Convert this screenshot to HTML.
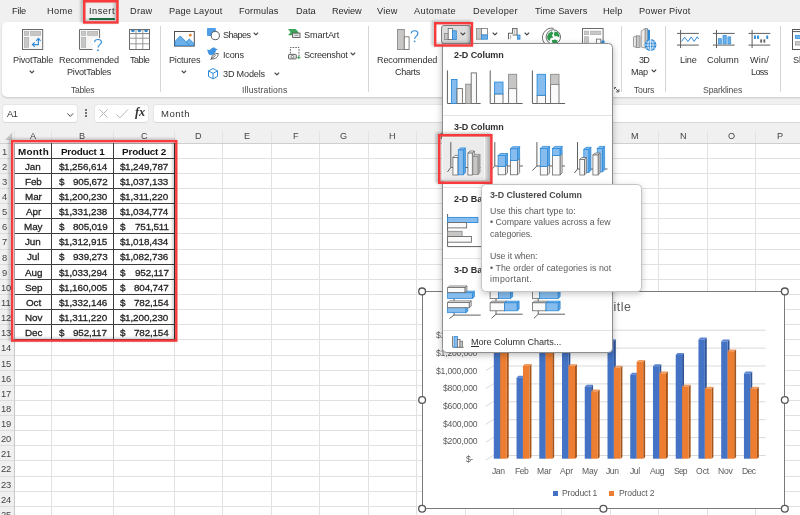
<!DOCTYPE html>
<html lang="en"><head><meta charset="utf-8"><title>Excel - Insert 3-D Clustered Column</title>
<style>
html,body{margin:0;padding:0;}
body{width:800px;height:515px;overflow:hidden;position:relative;background:#f0f0f0;font-family:"Liberation Sans",sans-serif;}
.b{position:absolute;box-sizing:border-box;}
.t{position:absolute;white-space:pre;font-family:"Liberation Sans",sans-serif;will-change:transform;transform:rotate(0.05deg);}
svg{overflow:visible;}
</style></head><body>
<div class="b" style="left:2.00px;top:22.00px;width:830.00px;height:75.00px;background:#fff;border-radius:5px;box-shadow:0 1px 2px rgba(0,0,0,.18);"></div>
<span class="t" style="left:12.00px;top:7.00px;font-size:9.2px;line-height:9.2px;color:#2b2b2b;letter-spacing:-0.206px;">File</span>
<span class="t" style="left:47.00px;top:7.00px;font-size:9.2px;line-height:9.2px;color:#2b2b2b;letter-spacing:0.365px;">Home</span>
<span class="t" style="left:89.00px;top:7.00px;font-size:9.2px;line-height:9.2px;color:#2b2b2b;letter-spacing:0.498px;">Insert</span>
<span class="t" style="left:129.50px;top:7.00px;font-size:9.2px;line-height:9.2px;color:#2b2b2b;letter-spacing:0.258px;">Draw</span>
<span class="t" style="left:169.00px;top:7.00px;font-size:9.2px;line-height:9.2px;color:#2b2b2b;letter-spacing:0.167px;">Page Layout</span>
<span class="t" style="left:239.40px;top:7.00px;font-size:9.2px;line-height:9.2px;color:#2b2b2b;letter-spacing:0.157px;">Formulas</span>
<span class="t" style="left:295.70px;top:7.00px;font-size:9.2px;line-height:9.2px;color:#2b2b2b;letter-spacing:0.067px;">Data</span>
<span class="t" style="left:331.80px;top:7.00px;font-size:9.2px;line-height:9.2px;color:#2b2b2b;letter-spacing:-0.078px;">Review</span>
<span class="t" style="left:377.00px;top:7.00px;font-size:9.2px;line-height:9.2px;color:#2b2b2b;letter-spacing:0.206px;">View</span>
<span class="t" style="left:414.00px;top:7.00px;font-size:9.2px;line-height:9.2px;color:#2b2b2b;letter-spacing:0.328px;">Automate</span>
<span class="t" style="left:473.00px;top:7.00px;font-size:9.2px;line-height:9.2px;color:#2b2b2b;letter-spacing:0.340px;">Developer</span>
<span class="t" style="left:534.60px;top:7.00px;font-size:9.2px;line-height:9.2px;color:#2b2b2b;letter-spacing:0.101px;">Time Savers</span>
<span class="t" style="left:602.60px;top:7.00px;font-size:9.2px;line-height:9.2px;color:#2b2b2b;letter-spacing:0.120px;">Help</span>
<span class="t" style="left:639.40px;top:7.00px;font-size:9.2px;line-height:9.2px;color:#2b2b2b;letter-spacing:0.228px;">Power Pivot</span>
<div class="b" style="left:88.80px;top:17.80px;width:26.70px;height:1.90px;background:#217346;border-radius:1px;"></div>
<svg class="b" style="left:83.00px;top:-0.40px;filter:drop-shadow(-1.6px -0.8px 1.4px rgba(0,0,0,.3));" width="35.70" height="23.70" viewBox="0 0 35.70 23.70"><rect x="1.25" y="1.25" width="33.20" height="21.20" fill="none" stroke="#f83a3c" stroke-width="2.5"/></svg>
<div class="b" style="left:2.00px;top:103.60px;width:76.20px;height:19.40px;background:#fff;border-radius:4px;border:1px solid #e6e6e6;border-bottom-color:#d9d9d9;"></div>
<span class="t" style="left:7.00px;top:110.00px;font-size:9.3px;line-height:9.3px;color:#333;letter-spacing:-0.388px;">A1</span>
<svg class="b" style="left:66.80px;top:112.60px;" width="6.6" height="4" viewBox="0 0 6.6 4"><path d="M0.4 0.4 L3.3 3.4 L6.2 0.4" fill="none" stroke="#4a4a4a" stroke-width="1" stroke-linejoin="round"/></svg>
<div class="b" style="left:85.10px;top:109.10px;width:1.90px;height:1.90px;background:#4a4a4a;border-radius:1px;"></div>
<div class="b" style="left:85.10px;top:112.30px;width:1.90px;height:1.90px;background:#4a4a4a;border-radius:1px;"></div>
<div class="b" style="left:85.10px;top:115.40px;width:1.90px;height:1.90px;background:#4a4a4a;border-radius:1px;"></div>
<div class="b" style="left:94.30px;top:103.60px;width:54.90px;height:19.40px;background:#fff;border-radius:4px;border:1px solid #e6e6e6;border-bottom-color:#d9d9d9;"></div>
<svg class="b" style="left:99.00px;top:109.00px;" width="9" height="9" viewBox="0 0 9 9"><path d="M0.5 0.5 L8.5 8.5 M8.5 0.5 L0.5 8.5" fill="none" stroke="#b5b5b5" stroke-width="1"/></svg>
<svg class="b" style="left:115.60px;top:108.60px;" width="12.4" height="9.4" viewBox="0 0 12.4 9.4"><path d="M0.5 5.6 L3.9 8.9 L11.9 0.6" fill="none" stroke="#b5b5b5" stroke-width="1"/></svg>
<span class="t" style="left:134.8px;top:106.4px;font-size:12.4px;line-height:13px;color:#333;font-family:'Liberation Serif',serif;font-style:italic;font-weight:700;letter-spacing:-0.2px;">fx</span>
<div class="b" style="left:153.30px;top:103.60px;width:700.00px;height:19.40px;background:#fff;border-radius:4px;border:1px solid #e6e6e6;border-bottom-color:#d9d9d9;"></div>
<span class="t" style="left:161.40px;top:109.00px;font-size:9.5px;line-height:9.5px;color:#333;letter-spacing:0.519px;">Month</span>
<div class="b" style="left:0.00px;top:143.50px;width:800.00px;height:380.00px;background:#fff;"></div>
<div class="b" style="left:0.00px;top:143.00px;width:800.00px;height:1.00px;background:#cfcfcf;"></div>
<div class="b" style="left:14.00px;top:144.00px;width:1.00px;height:375.00px;background:#e1e1e1;"></div>
<div class="b" style="left:14.00px;top:131.00px;width:1.00px;height:12.00px;background:#e2e2e2;"></div>
<div class="b" style="left:51.00px;top:144.00px;width:1.00px;height:375.00px;background:#e1e1e1;"></div>
<div class="b" style="left:51.00px;top:131.00px;width:1.00px;height:12.00px;background:#e2e2e2;"></div>
<div class="b" style="left:112.90px;top:144.00px;width:1.00px;height:375.00px;background:#e1e1e1;"></div>
<div class="b" style="left:112.90px;top:131.00px;width:1.00px;height:12.00px;background:#e2e2e2;"></div>
<div class="b" style="left:173.80px;top:144.00px;width:1.00px;height:375.00px;background:#e1e1e1;"></div>
<div class="b" style="left:173.80px;top:131.00px;width:1.00px;height:12.00px;background:#e2e2e2;"></div>
<div class="b" style="left:222.25px;top:144.00px;width:1.00px;height:375.00px;background:#e1e1e1;"></div>
<div class="b" style="left:222.25px;top:131.00px;width:1.00px;height:12.00px;background:#e2e2e2;"></div>
<div class="b" style="left:270.70px;top:144.00px;width:1.00px;height:375.00px;background:#e1e1e1;"></div>
<div class="b" style="left:270.70px;top:131.00px;width:1.00px;height:12.00px;background:#e2e2e2;"></div>
<div class="b" style="left:319.15px;top:144.00px;width:1.00px;height:375.00px;background:#e1e1e1;"></div>
<div class="b" style="left:319.15px;top:131.00px;width:1.00px;height:12.00px;background:#e2e2e2;"></div>
<div class="b" style="left:367.60px;top:144.00px;width:1.00px;height:375.00px;background:#e1e1e1;"></div>
<div class="b" style="left:367.60px;top:131.00px;width:1.00px;height:12.00px;background:#e2e2e2;"></div>
<div class="b" style="left:416.05px;top:144.00px;width:1.00px;height:375.00px;background:#e1e1e1;"></div>
<div class="b" style="left:416.05px;top:131.00px;width:1.00px;height:12.00px;background:#e2e2e2;"></div>
<div class="b" style="left:464.50px;top:144.00px;width:1.00px;height:375.00px;background:#e1e1e1;"></div>
<div class="b" style="left:464.50px;top:131.00px;width:1.00px;height:12.00px;background:#e2e2e2;"></div>
<div class="b" style="left:512.95px;top:144.00px;width:1.00px;height:375.00px;background:#e1e1e1;"></div>
<div class="b" style="left:512.95px;top:131.00px;width:1.00px;height:12.00px;background:#e2e2e2;"></div>
<div class="b" style="left:561.40px;top:144.00px;width:1.00px;height:375.00px;background:#e1e1e1;"></div>
<div class="b" style="left:561.40px;top:131.00px;width:1.00px;height:12.00px;background:#e2e2e2;"></div>
<div class="b" style="left:609.85px;top:144.00px;width:1.00px;height:375.00px;background:#e1e1e1;"></div>
<div class="b" style="left:609.85px;top:131.00px;width:1.00px;height:12.00px;background:#e2e2e2;"></div>
<div class="b" style="left:658.30px;top:144.00px;width:1.00px;height:375.00px;background:#e1e1e1;"></div>
<div class="b" style="left:658.30px;top:131.00px;width:1.00px;height:12.00px;background:#e2e2e2;"></div>
<div class="b" style="left:706.75px;top:144.00px;width:1.00px;height:375.00px;background:#e1e1e1;"></div>
<div class="b" style="left:706.75px;top:131.00px;width:1.00px;height:12.00px;background:#e2e2e2;"></div>
<div class="b" style="left:755.20px;top:144.00px;width:1.00px;height:375.00px;background:#e1e1e1;"></div>
<div class="b" style="left:755.20px;top:131.00px;width:1.00px;height:12.00px;background:#e2e2e2;"></div>
<div class="b" style="left:803.65px;top:144.00px;width:1.00px;height:375.00px;background:#e1e1e1;"></div>
<div class="b" style="left:803.65px;top:131.00px;width:1.00px;height:12.00px;background:#e2e2e2;"></div>
<div class="b" style="left:852.10px;top:144.00px;width:1.00px;height:375.00px;background:#e1e1e1;"></div>
<div class="b" style="left:852.10px;top:131.00px;width:1.00px;height:12.00px;background:#e2e2e2;"></div>
<div class="b" style="left:0.00px;top:157.83px;width:800.00px;height:1.00px;background:#e1e1e1;"></div>
<div class="b" style="left:0.00px;top:172.96px;width:800.00px;height:1.00px;background:#e1e1e1;"></div>
<div class="b" style="left:0.00px;top:188.09px;width:800.00px;height:1.00px;background:#e1e1e1;"></div>
<div class="b" style="left:0.00px;top:203.22px;width:800.00px;height:1.00px;background:#e1e1e1;"></div>
<div class="b" style="left:0.00px;top:218.35px;width:800.00px;height:1.00px;background:#e1e1e1;"></div>
<div class="b" style="left:0.00px;top:233.48px;width:800.00px;height:1.00px;background:#e1e1e1;"></div>
<div class="b" style="left:0.00px;top:248.61px;width:800.00px;height:1.00px;background:#e1e1e1;"></div>
<div class="b" style="left:0.00px;top:263.74px;width:800.00px;height:1.00px;background:#e1e1e1;"></div>
<div class="b" style="left:0.00px;top:278.87px;width:800.00px;height:1.00px;background:#e1e1e1;"></div>
<div class="b" style="left:0.00px;top:294.00px;width:800.00px;height:1.00px;background:#e1e1e1;"></div>
<div class="b" style="left:0.00px;top:309.13px;width:800.00px;height:1.00px;background:#e1e1e1;"></div>
<div class="b" style="left:0.00px;top:324.26px;width:800.00px;height:1.00px;background:#e1e1e1;"></div>
<div class="b" style="left:0.00px;top:339.39px;width:800.00px;height:1.00px;background:#e1e1e1;"></div>
<div class="b" style="left:0.00px;top:354.52px;width:800.00px;height:1.00px;background:#e1e1e1;"></div>
<div class="b" style="left:0.00px;top:369.65px;width:800.00px;height:1.00px;background:#e1e1e1;"></div>
<div class="b" style="left:0.00px;top:384.78px;width:800.00px;height:1.00px;background:#e1e1e1;"></div>
<div class="b" style="left:0.00px;top:399.91px;width:800.00px;height:1.00px;background:#e1e1e1;"></div>
<div class="b" style="left:0.00px;top:415.04px;width:800.00px;height:1.00px;background:#e1e1e1;"></div>
<div class="b" style="left:0.00px;top:430.17px;width:800.00px;height:1.00px;background:#e1e1e1;"></div>
<div class="b" style="left:0.00px;top:445.30px;width:800.00px;height:1.00px;background:#e1e1e1;"></div>
<div class="b" style="left:0.00px;top:460.43px;width:800.00px;height:1.00px;background:#e1e1e1;"></div>
<div class="b" style="left:0.00px;top:475.56px;width:800.00px;height:1.00px;background:#e1e1e1;"></div>
<div class="b" style="left:0.00px;top:490.69px;width:800.00px;height:1.00px;background:#e1e1e1;"></div>
<div class="b" style="left:0.00px;top:505.82px;width:800.00px;height:1.00px;background:#e1e1e1;"></div>
<div class="b" style="left:0.00px;top:520.95px;width:800.00px;height:1.00px;background:#e1e1e1;"></div>
<div class="b" style="left:0.00px;top:536.08px;width:800.00px;height:1.00px;background:#e1e1e1;"></div>
<div class="b" style="left:0.00px;top:144.00px;width:14.70px;height:375.00px;background:#f0f0f0;border-right:1px solid #c9c9c9;"></div>
<div class="b" style="left:0.00px;top:157.83px;width:13.70px;height:1.00px;background:#dcdcdc;"></div>
<div class="b" style="left:0.00px;top:172.96px;width:13.70px;height:1.00px;background:#dcdcdc;"></div>
<div class="b" style="left:0.00px;top:188.09px;width:13.70px;height:1.00px;background:#dcdcdc;"></div>
<div class="b" style="left:0.00px;top:203.22px;width:13.70px;height:1.00px;background:#dcdcdc;"></div>
<div class="b" style="left:0.00px;top:218.35px;width:13.70px;height:1.00px;background:#dcdcdc;"></div>
<div class="b" style="left:0.00px;top:233.48px;width:13.70px;height:1.00px;background:#dcdcdc;"></div>
<div class="b" style="left:0.00px;top:248.61px;width:13.70px;height:1.00px;background:#dcdcdc;"></div>
<div class="b" style="left:0.00px;top:263.74px;width:13.70px;height:1.00px;background:#dcdcdc;"></div>
<div class="b" style="left:0.00px;top:278.87px;width:13.70px;height:1.00px;background:#dcdcdc;"></div>
<div class="b" style="left:0.00px;top:294.00px;width:13.70px;height:1.00px;background:#dcdcdc;"></div>
<div class="b" style="left:0.00px;top:309.13px;width:13.70px;height:1.00px;background:#dcdcdc;"></div>
<div class="b" style="left:0.00px;top:324.26px;width:13.70px;height:1.00px;background:#dcdcdc;"></div>
<div class="b" style="left:0.00px;top:339.39px;width:13.70px;height:1.00px;background:#dcdcdc;"></div>
<div class="b" style="left:0.00px;top:354.52px;width:13.70px;height:1.00px;background:#dcdcdc;"></div>
<div class="b" style="left:0.00px;top:369.65px;width:13.70px;height:1.00px;background:#dcdcdc;"></div>
<div class="b" style="left:0.00px;top:384.78px;width:13.70px;height:1.00px;background:#dcdcdc;"></div>
<div class="b" style="left:0.00px;top:399.91px;width:13.70px;height:1.00px;background:#dcdcdc;"></div>
<div class="b" style="left:0.00px;top:415.04px;width:13.70px;height:1.00px;background:#dcdcdc;"></div>
<div class="b" style="left:0.00px;top:430.17px;width:13.70px;height:1.00px;background:#dcdcdc;"></div>
<div class="b" style="left:0.00px;top:445.30px;width:13.70px;height:1.00px;background:#dcdcdc;"></div>
<div class="b" style="left:0.00px;top:460.43px;width:13.70px;height:1.00px;background:#dcdcdc;"></div>
<div class="b" style="left:0.00px;top:475.56px;width:13.70px;height:1.00px;background:#dcdcdc;"></div>
<div class="b" style="left:0.00px;top:490.69px;width:13.70px;height:1.00px;background:#dcdcdc;"></div>
<div class="b" style="left:0.00px;top:505.82px;width:13.70px;height:1.00px;background:#dcdcdc;"></div>
<div class="b" style="left:0.00px;top:520.95px;width:13.70px;height:1.00px;background:#dcdcdc;"></div>
<div class="b" style="left:0.00px;top:536.08px;width:13.70px;height:1.00px;background:#dcdcdc;"></div>
<svg class="b" style="left:0.00px;top:0.00px;" width="20" height="145" viewBox="0 0 20 145"><path d="M12.3 132.6 V139.9 H4.9 Z" fill="#c6c6c6"/></svg>
<span class="t" style="left:29.97px;top:132.00px;font-size:9.1px;line-height:9.1px;color:#444;">A</span>
<span class="t" style="left:79.42px;top:132.00px;font-size:9.1px;line-height:9.1px;color:#444;">B</span>
<span class="t" style="left:140.56px;top:132.00px;font-size:9.1px;line-height:9.1px;color:#444;">C</span>
<span class="t" style="left:195.24px;top:132.00px;font-size:9.1px;line-height:9.1px;color:#444;">D</span>
<span class="t" style="left:243.94px;top:132.00px;font-size:9.1px;line-height:9.1px;color:#444;">E</span>
<span class="t" style="left:292.65px;top:132.00px;font-size:9.1px;line-height:9.1px;color:#444;">F</span>
<span class="t" style="left:340.34px;top:132.00px;font-size:9.1px;line-height:9.1px;color:#444;">G</span>
<span class="t" style="left:389.04px;top:132.00px;font-size:9.1px;line-height:9.1px;color:#444;">H</span>
<span class="t" style="left:439.51px;top:132.00px;font-size:9.1px;line-height:9.1px;color:#444;">I</span>
<span class="t" style="left:486.95px;top:132.00px;font-size:9.1px;line-height:9.1px;color:#444;">J</span>
<span class="t" style="left:534.64px;top:132.00px;font-size:9.1px;line-height:9.1px;color:#444;">K</span>
<span class="t" style="left:583.59px;top:132.00px;font-size:9.1px;line-height:9.1px;color:#444;">L</span>
<span class="t" style="left:630.78px;top:132.00px;font-size:9.1px;line-height:9.1px;color:#444;">M</span>
<span class="t" style="left:679.74px;top:132.00px;font-size:9.1px;line-height:9.1px;color:#444;">N</span>
<span class="t" style="left:727.94px;top:132.00px;font-size:9.1px;line-height:9.1px;color:#444;">O</span>
<span class="t" style="left:776.89px;top:132.00px;font-size:9.1px;line-height:9.1px;color:#444;">P</span>
<span class="t" style="left:2.39px;top:147.00px;font-size:9.4px;line-height:9.4px;color:#444;">1</span>
<span class="t" style="left:2.39px;top:162.00px;font-size:9.4px;line-height:9.4px;color:#444;">2</span>
<span class="t" style="left:2.39px;top:177.00px;font-size:9.4px;line-height:9.4px;color:#444;">3</span>
<span class="t" style="left:2.39px;top:192.00px;font-size:9.4px;line-height:9.4px;color:#444;">4</span>
<span class="t" style="left:2.39px;top:207.00px;font-size:9.4px;line-height:9.4px;color:#444;">5</span>
<span class="t" style="left:2.39px;top:222.00px;font-size:9.4px;line-height:9.4px;color:#444;">6</span>
<span class="t" style="left:2.39px;top:237.00px;font-size:9.4px;line-height:9.4px;color:#444;">7</span>
<span class="t" style="left:2.39px;top:253.00px;font-size:9.4px;line-height:9.4px;color:#444;">8</span>
<span class="t" style="left:2.39px;top:268.00px;font-size:9.4px;line-height:9.4px;color:#444;">9</span>
<span class="t" style="left:0.60px;top:283.00px;font-size:9.4px;line-height:9.4px;color:#444;letter-spacing:-0.328px;">10</span>
<span class="t" style="left:0.60px;top:298.00px;font-size:9.4px;line-height:9.4px;color:#444;letter-spacing:0.021px;">11</span>
<span class="t" style="left:0.60px;top:313.00px;font-size:9.4px;line-height:9.4px;color:#444;letter-spacing:-0.328px;">12</span>
<span class="t" style="left:0.60px;top:328.00px;font-size:9.4px;line-height:9.4px;color:#444;letter-spacing:-0.328px;">13</span>
<span class="t" style="left:0.60px;top:343.00px;font-size:9.4px;line-height:9.4px;color:#444;letter-spacing:-0.328px;">14</span>
<span class="t" style="left:0.60px;top:359.00px;font-size:9.4px;line-height:9.4px;color:#444;letter-spacing:-0.328px;">15</span>
<span class="t" style="left:0.60px;top:374.00px;font-size:9.4px;line-height:9.4px;color:#444;letter-spacing:-0.328px;">16</span>
<span class="t" style="left:0.60px;top:389.00px;font-size:9.4px;line-height:9.4px;color:#444;letter-spacing:-0.328px;">17</span>
<span class="t" style="left:0.60px;top:404.00px;font-size:9.4px;line-height:9.4px;color:#444;letter-spacing:-0.328px;">18</span>
<span class="t" style="left:0.60px;top:419.00px;font-size:9.4px;line-height:9.4px;color:#444;letter-spacing:-0.328px;">19</span>
<span class="t" style="left:0.60px;top:434.00px;font-size:9.4px;line-height:9.4px;color:#444;letter-spacing:-0.328px;">20</span>
<span class="t" style="left:0.60px;top:449.00px;font-size:9.4px;line-height:9.4px;color:#444;letter-spacing:-0.328px;">21</span>
<span class="t" style="left:0.60px;top:464.00px;font-size:9.4px;line-height:9.4px;color:#444;letter-spacing:-0.328px;">22</span>
<span class="t" style="left:0.60px;top:480.00px;font-size:9.4px;line-height:9.4px;color:#444;letter-spacing:-0.328px;">23</span>
<span class="t" style="left:0.60px;top:495.00px;font-size:9.4px;line-height:9.4px;color:#444;letter-spacing:-0.328px;">24</span>
<span class="t" style="left:0.60px;top:510.00px;font-size:9.4px;line-height:9.4px;color:#444;letter-spacing:-0.328px;">25</span>
<div class="b" style="left:12.00px;top:141.00px;width:163.00px;height:199.00px;background:#fff;"></div>
<div class="b" style="left:14.00px;top:142.70px;width:160.80px;height:1.00px;background:#a4a4a4;"></div>
<div class="b" style="left:14.00px;top:157.83px;width:160.80px;height:1.00px;background:#3c3c3c;"></div>
<div class="b" style="left:14.00px;top:172.96px;width:160.80px;height:1.00px;background:#3c3c3c;"></div>
<div class="b" style="left:14.00px;top:188.09px;width:160.80px;height:1.00px;background:#3c3c3c;"></div>
<div class="b" style="left:14.00px;top:203.22px;width:160.80px;height:1.00px;background:#3c3c3c;"></div>
<div class="b" style="left:14.00px;top:218.35px;width:160.80px;height:1.00px;background:#3c3c3c;"></div>
<div class="b" style="left:14.00px;top:233.48px;width:160.80px;height:1.00px;background:#3c3c3c;"></div>
<div class="b" style="left:14.00px;top:248.61px;width:160.80px;height:1.00px;background:#3c3c3c;"></div>
<div class="b" style="left:14.00px;top:263.74px;width:160.80px;height:1.00px;background:#3c3c3c;"></div>
<div class="b" style="left:14.00px;top:278.87px;width:160.80px;height:1.00px;background:#3c3c3c;"></div>
<div class="b" style="left:14.00px;top:294.00px;width:160.80px;height:1.00px;background:#3c3c3c;"></div>
<div class="b" style="left:14.00px;top:309.13px;width:160.80px;height:1.00px;background:#3c3c3c;"></div>
<div class="b" style="left:14.00px;top:324.26px;width:160.80px;height:1.00px;background:#3c3c3c;"></div>
<div class="b" style="left:14.00px;top:339.39px;width:160.80px;height:1.00px;background:#3c3c3c;"></div>
<div class="b" style="left:14.00px;top:142.70px;width:1.00px;height:197.69px;background:#a4a4a4;"></div>
<div class="b" style="left:51.00px;top:142.70px;width:1.00px;height:197.69px;background:#3c3c3c;"></div>
<div class="b" style="left:112.90px;top:142.70px;width:1.00px;height:197.69px;background:#3c3c3c;"></div>
<div class="b" style="left:173.80px;top:142.70px;width:1.00px;height:197.69px;background:#3c3c3c;"></div>
<span class="t" style="left:17.70px;top:147.00px;font-size:9.9px;line-height:9.9px;color:#111;font-weight:700;letter-spacing:0.263px;">Month</span>
<span class="t" style="left:60.60px;top:147.00px;font-size:9.9px;line-height:9.9px;color:#111;font-weight:700;letter-spacing:-0.240px;">Product 1</span>
<span class="t" style="left:122.00px;top:147.00px;font-size:9.9px;line-height:9.9px;color:#111;font-weight:700;letter-spacing:-0.151px;">Product 2</span>
<span class="t" style="left:25.34px;top:162.00px;font-size:9.9px;line-height:9.9px;color:#222;letter-spacing:-0.080px;-webkit-text-stroke:0.28px #222;">Jan</span>
<span class="t" style="left:58.60px;top:162.00px;font-size:9.9px;line-height:9.9px;color:#222;letter-spacing:-0.165px;-webkit-text-stroke:0.28px #222;">$</span>
<span class="t" style="left:63.94px;top:162.00px;font-size:9.9px;line-height:9.9px;color:#222;letter-spacing:-0.076px;-webkit-text-stroke:0.28px #222;">1,256,614</span>
<span class="t" style="left:120.00px;top:162.00px;font-size:9.9px;line-height:9.9px;color:#222;letter-spacing:-0.165px;-webkit-text-stroke:0.28px #222;">$</span>
<span class="t" style="left:125.34px;top:162.00px;font-size:9.9px;line-height:9.9px;color:#222;letter-spacing:-0.076px;-webkit-text-stroke:0.28px #222;">1,249,787</span>
<span class="t" style="left:24.80px;top:177.00px;font-size:9.9px;line-height:9.9px;color:#222;letter-spacing:-0.085px;-webkit-text-stroke:0.28px #222;">Feb</span>
<span class="t" style="left:58.60px;top:177.00px;font-size:9.9px;line-height:9.9px;color:#222;letter-spacing:-0.165px;-webkit-text-stroke:0.28px #222;">$</span>
<span class="t" style="left:72.77px;top:177.00px;font-size:9.9px;line-height:9.9px;color:#222;letter-spacing:-0.179px;-webkit-text-stroke:0.28px #222;">905,672</span>
<span class="t" style="left:120.00px;top:177.00px;font-size:9.9px;line-height:9.9px;color:#222;letter-spacing:-0.165px;-webkit-text-stroke:0.28px #222;">$</span>
<span class="t" style="left:125.34px;top:177.00px;font-size:9.9px;line-height:9.9px;color:#222;letter-spacing:-0.076px;-webkit-text-stroke:0.28px #222;">1,037,133</span>
<span class="t" style="left:24.80px;top:192.00px;font-size:9.9px;line-height:9.9px;color:#222;letter-spacing:-0.085px;-webkit-text-stroke:0.28px #222;">Mar</span>
<span class="t" style="left:58.60px;top:192.00px;font-size:9.9px;line-height:9.9px;color:#222;letter-spacing:-0.165px;-webkit-text-stroke:0.28px #222;">$</span>
<span class="t" style="left:63.94px;top:192.00px;font-size:9.9px;line-height:9.9px;color:#222;letter-spacing:-0.076px;-webkit-text-stroke:0.28px #222;">1,200,230</span>
<span class="t" style="left:120.00px;top:192.00px;font-size:9.9px;line-height:9.9px;color:#222;letter-spacing:-0.165px;-webkit-text-stroke:0.28px #222;">$</span>
<span class="t" style="left:125.34px;top:192.00px;font-size:9.9px;line-height:9.9px;color:#222;letter-spacing:0.006px;-webkit-text-stroke:0.28px #222;">1,311,220</span>
<span class="t" style="left:25.61px;top:207.00px;font-size:9.9px;line-height:9.9px;color:#222;letter-spacing:-0.077px;-webkit-text-stroke:0.28px #222;">Apr</span>
<span class="t" style="left:58.60px;top:207.00px;font-size:9.9px;line-height:9.9px;color:#222;letter-spacing:-0.165px;-webkit-text-stroke:0.28px #222;">$</span>
<span class="t" style="left:63.94px;top:207.00px;font-size:9.9px;line-height:9.9px;color:#222;letter-spacing:-0.076px;-webkit-text-stroke:0.28px #222;">1,331,238</span>
<span class="t" style="left:120.00px;top:207.00px;font-size:9.9px;line-height:9.9px;color:#222;letter-spacing:-0.165px;-webkit-text-stroke:0.28px #222;">$</span>
<span class="t" style="left:125.34px;top:207.00px;font-size:9.9px;line-height:9.9px;color:#222;letter-spacing:-0.076px;-webkit-text-stroke:0.28px #222;">1,034,774</span>
<span class="t" style="left:23.99px;top:222.00px;font-size:9.9px;line-height:9.9px;color:#222;letter-spacing:-0.094px;-webkit-text-stroke:0.28px #222;">May</span>
<span class="t" style="left:58.60px;top:222.00px;font-size:9.9px;line-height:9.9px;color:#222;letter-spacing:-0.165px;-webkit-text-stroke:0.28px #222;">$</span>
<span class="t" style="left:72.77px;top:222.00px;font-size:9.9px;line-height:9.9px;color:#222;letter-spacing:-0.179px;-webkit-text-stroke:0.28px #222;">805,019</span>
<span class="t" style="left:120.00px;top:222.00px;font-size:9.9px;line-height:9.9px;color:#222;letter-spacing:-0.165px;-webkit-text-stroke:0.28px #222;">$</span>
<span class="t" style="left:134.87px;top:222.00px;font-size:9.9px;line-height:9.9px;color:#222;letter-spacing:-0.175px;-webkit-text-stroke:0.28px #222;">751,511</span>
<span class="t" style="left:25.34px;top:237.00px;font-size:9.9px;line-height:9.9px;color:#222;letter-spacing:-0.080px;-webkit-text-stroke:0.28px #222;">Jun</span>
<span class="t" style="left:58.60px;top:237.00px;font-size:9.9px;line-height:9.9px;color:#222;letter-spacing:-0.165px;-webkit-text-stroke:0.28px #222;">$</span>
<span class="t" style="left:63.94px;top:237.00px;font-size:9.9px;line-height:9.9px;color:#222;letter-spacing:-0.076px;-webkit-text-stroke:0.28px #222;">1,312,915</span>
<span class="t" style="left:120.00px;top:237.00px;font-size:9.9px;line-height:9.9px;color:#222;letter-spacing:-0.165px;-webkit-text-stroke:0.28px #222;">$</span>
<span class="t" style="left:125.34px;top:237.00px;font-size:9.9px;line-height:9.9px;color:#222;letter-spacing:-0.076px;-webkit-text-stroke:0.28px #222;">1,018,434</span>
<span class="t" style="left:26.97px;top:252.00px;font-size:9.9px;line-height:9.9px;color:#222;letter-spacing:-0.063px;-webkit-text-stroke:0.28px #222;">Jul</span>
<span class="t" style="left:58.60px;top:252.00px;font-size:9.9px;line-height:9.9px;color:#222;letter-spacing:-0.165px;-webkit-text-stroke:0.28px #222;">$</span>
<span class="t" style="left:72.77px;top:252.00px;font-size:9.9px;line-height:9.9px;color:#222;letter-spacing:-0.179px;-webkit-text-stroke:0.28px #222;">939,273</span>
<span class="t" style="left:120.00px;top:252.00px;font-size:9.9px;line-height:9.9px;color:#222;letter-spacing:-0.165px;-webkit-text-stroke:0.28px #222;">$</span>
<span class="t" style="left:125.34px;top:252.00px;font-size:9.9px;line-height:9.9px;color:#222;letter-spacing:-0.076px;-webkit-text-stroke:0.28px #222;">1,082,736</span>
<span class="t" style="left:24.52px;top:268.00px;font-size:9.9px;line-height:9.9px;color:#222;letter-spacing:-0.088px;-webkit-text-stroke:0.28px #222;">Aug</span>
<span class="t" style="left:58.60px;top:268.00px;font-size:9.9px;line-height:9.9px;color:#222;letter-spacing:-0.165px;-webkit-text-stroke:0.28px #222;">$</span>
<span class="t" style="left:63.94px;top:268.00px;font-size:9.9px;line-height:9.9px;color:#222;letter-spacing:-0.076px;-webkit-text-stroke:0.28px #222;">1,033,294</span>
<span class="t" style="left:120.00px;top:268.00px;font-size:9.9px;line-height:9.9px;color:#222;letter-spacing:-0.165px;-webkit-text-stroke:0.28px #222;">$</span>
<span class="t" style="left:134.87px;top:268.00px;font-size:9.9px;line-height:9.9px;color:#222;letter-spacing:-0.175px;-webkit-text-stroke:0.28px #222;">952,117</span>
<span class="t" style="left:24.52px;top:283.00px;font-size:9.9px;line-height:9.9px;color:#222;letter-spacing:-0.088px;-webkit-text-stroke:0.28px #222;">Sep</span>
<span class="t" style="left:58.60px;top:283.00px;font-size:9.9px;line-height:9.9px;color:#222;letter-spacing:-0.165px;-webkit-text-stroke:0.28px #222;">$</span>
<span class="t" style="left:63.94px;top:283.00px;font-size:9.9px;line-height:9.9px;color:#222;letter-spacing:-0.076px;-webkit-text-stroke:0.28px #222;">1,160,005</span>
<span class="t" style="left:120.00px;top:283.00px;font-size:9.9px;line-height:9.9px;color:#222;letter-spacing:-0.165px;-webkit-text-stroke:0.28px #222;">$</span>
<span class="t" style="left:134.17px;top:283.00px;font-size:9.9px;line-height:9.9px;color:#222;letter-spacing:-0.179px;-webkit-text-stroke:0.28px #222;">804,747</span>
<span class="t" style="left:25.62px;top:298.00px;font-size:9.9px;line-height:9.9px;color:#222;letter-spacing:-0.077px;-webkit-text-stroke:0.28px #222;">Oct</span>
<span class="t" style="left:58.60px;top:298.00px;font-size:9.9px;line-height:9.9px;color:#222;letter-spacing:-0.165px;-webkit-text-stroke:0.28px #222;">$</span>
<span class="t" style="left:63.94px;top:298.00px;font-size:9.9px;line-height:9.9px;color:#222;letter-spacing:-0.076px;-webkit-text-stroke:0.28px #222;">1,332,146</span>
<span class="t" style="left:120.00px;top:298.00px;font-size:9.9px;line-height:9.9px;color:#222;letter-spacing:-0.165px;-webkit-text-stroke:0.28px #222;">$</span>
<span class="t" style="left:134.17px;top:298.00px;font-size:9.9px;line-height:9.9px;color:#222;letter-spacing:-0.179px;-webkit-text-stroke:0.28px #222;">782,154</span>
<span class="t" style="left:24.53px;top:313.00px;font-size:9.9px;line-height:9.9px;color:#222;letter-spacing:-0.088px;-webkit-text-stroke:0.28px #222;">Nov</span>
<span class="t" style="left:58.60px;top:313.00px;font-size:9.9px;line-height:9.9px;color:#222;letter-spacing:-0.165px;-webkit-text-stroke:0.28px #222;">$</span>
<span class="t" style="left:63.94px;top:313.00px;font-size:9.9px;line-height:9.9px;color:#222;letter-spacing:0.006px;-webkit-text-stroke:0.28px #222;">1,311,220</span>
<span class="t" style="left:120.00px;top:313.00px;font-size:9.9px;line-height:9.9px;color:#222;letter-spacing:-0.165px;-webkit-text-stroke:0.28px #222;">$</span>
<span class="t" style="left:125.34px;top:313.00px;font-size:9.9px;line-height:9.9px;color:#222;letter-spacing:-0.076px;-webkit-text-stroke:0.28px #222;">1,200,230</span>
<span class="t" style="left:24.53px;top:328.00px;font-size:9.9px;line-height:9.9px;color:#222;letter-spacing:-0.088px;-webkit-text-stroke:0.28px #222;">Dec</span>
<span class="t" style="left:58.60px;top:328.00px;font-size:9.9px;line-height:9.9px;color:#222;letter-spacing:-0.165px;-webkit-text-stroke:0.28px #222;">$</span>
<span class="t" style="left:73.47px;top:328.00px;font-size:9.9px;line-height:9.9px;color:#222;letter-spacing:-0.175px;-webkit-text-stroke:0.28px #222;">952,117</span>
<span class="t" style="left:120.00px;top:328.00px;font-size:9.9px;line-height:9.9px;color:#222;letter-spacing:-0.165px;-webkit-text-stroke:0.28px #222;">$</span>
<span class="t" style="left:134.17px;top:328.00px;font-size:9.9px;line-height:9.9px;color:#222;letter-spacing:-0.179px;-webkit-text-stroke:0.28px #222;">782,154</span>
<svg class="b" style="left:10.50px;top:139.80px;filter:drop-shadow(-1.6px -0.8px 1.4px rgba(0,0,0,.3));" width="166.50" height="201.80" viewBox="0 0 166.50 201.80"><rect x="1.20" y="1.20" width="164.10" height="199.40" fill="none" stroke="#f83a3c" stroke-width="2.4"/></svg>
<svg class="b" style="left:22.00px;top:28.90px;" width="21.2" height="21" viewBox="0 0 21.2 21"><rect x="0.5" y="0.5" width="20.2" height="20" fill="#f6f6f6" stroke="#6b6b6b"/>
<rect x="2.5" y="2.5" width="4.2" height="3.8" fill="#c9c7c5" stroke="#a9a9a9" stroke-width=".6"/>
<rect x="8.7" y="2.5" width="10" height="3.8" fill="#c9c7c5" stroke="#a9a9a9" stroke-width=".6"/>
<rect x="2.5" y="8.4" width="4.2" height="10" fill="#c9c7c5" stroke="#a9a9a9" stroke-width=".6"/>
<path d="M11 15.6 H16.4 V9.8" fill="none" stroke="#2f8ad6" stroke-width="1.1"/>
<path d="M12.8 13.4 L10.4 15.6 L12.8 17.8 M14.2 11.8 L16.4 9.4 L18.6 11.8" fill="none" stroke="#2f8ad6" stroke-width="1.1"/></svg>
<span class="t" style="left:12.80px;top:56.00px;font-size:9.1px;line-height:9.1px;color:#303030;letter-spacing:-0.189px;">PivotTable</span>
<svg class="b" style="left:30.20px;top:70.65px;" width="3.8" height="1.9" viewBox="0 0 3.8 1.9"><path d="M0 0 L1.9 1.9 L3.8 0" fill="none" stroke="#444" stroke-width="1.1" stroke-linecap="round" stroke-linejoin="round"/></svg>
<svg class="b" style="left:78.80px;top:28.90px;" width="24" height="23" viewBox="0 0 24 23"><path d="M16.5 20.5 H0.5 V0.5 H20.6 V9" fill="#f6f6f6" stroke="#6b6b6b"/>
<rect x="2.5" y="2.5" width="4.2" height="3.8" fill="#c9c7c5" stroke="#a9a9a9" stroke-width=".6"/>
<rect x="8.7" y="2.5" width="10" height="3.8" fill="#c9c7c5" stroke="#a9a9a9" stroke-width=".6"/>
<rect x="2.5" y="8.4" width="4.2" height="10" fill="#c9c7c5" stroke="#a9a9a9" stroke-width=".6"/>
<rect x="13.5" y="9.2" width="10" height="13" fill="#fff"/>
<path d="M15.6 13.2 C15.6 9.6 22.4 9.6 22.4 13.2 C22.4 15.6 19 15.8 19 18.6" fill="none" stroke="#2f8ad6" stroke-width="1.15"/>
<circle cx="19" cy="21.2" r=".9" fill="#2f8ad6"/></svg>
<span class="t" style="left:58.80px;top:56.00px;font-size:9.1px;line-height:9.1px;color:#303030;letter-spacing:-0.165px;">Recommended</span>
<span class="t" style="left:66.90px;top:68.00px;font-size:9.1px;line-height:9.1px;color:#303030;letter-spacing:-0.212px;">PivotTables</span>
<svg class="b" style="left:128.90px;top:28.90px;" width="21" height="21" viewBox="0 0 21 21"><rect x="0.5" y="0.5" width="20" height="20" fill="#fff" stroke="#6b6b6b"/>
<path d="M0.5 4.6 H20.5" stroke="#6b6b6b" stroke-width=".9"/>
<path d="M0.5 9.2 H20.5 M0.5 14.8 H20.5 M7 0.5 V20.5 M13.8 0.5 V20.5" stroke="#8f8f8f" stroke-width=".9" fill="none"/>
<path d="M2 1 A1.9 2.2 0 0 0 5.8 1 Z M8.5 1 A1.9 2.2 0 0 0 12.3 1 Z M15.2 1 A1.9 2.2 0 0 0 19 1 Z" fill="#2f8ad6"/></svg>
<span class="t" style="left:129.60px;top:56.00px;font-size:9.1px;line-height:9.1px;color:#303030;letter-spacing:-0.491px;">Table</span>
<span class="t" style="left:70.70px;top:86.00px;font-size:8.6px;line-height:8.6px;color:#4a4a4a;letter-spacing:-0.260px;">Tables</span>
<div class="b" style="left:160.30px;top:25.80px;width:1.00px;height:66.70px;background:#d6d6d6;"></div>
<svg class="b" style="left:174.10px;top:31.10px;" width="20.8" height="15.6" viewBox="0 0 20.8 15.6"><rect x="0.5" y="0.5" width="19.8" height="14.6" fill="#fff" stroke="#4f4f4f"/>
<path d="M1 14.6 V10.5 L6.3 5 L12.2 11 L15.3 8 L19.8 12.4 V14.6 Z" fill="#6cb0ea" stroke="#2f8ad6" stroke-width=".9" stroke-linejoin="round"/>
<path d="M12.2 11 L15.8 14.6" stroke="#2f8ad6" stroke-width=".9"/>
<circle cx="16.3" cy="4.2" r="1.35" fill="#e8822a"/></svg>
<span class="t" style="left:169.00px;top:56.00px;font-size:9.1px;line-height:9.1px;color:#303030;letter-spacing:-0.197px;">Pictures</span>
<svg class="b" style="left:182.30px;top:70.65px;" width="3.8" height="1.9" viewBox="0 0 3.8 1.9"><path d="M0 0 L1.9 1.9 L3.8 0" fill="none" stroke="#444" stroke-width="1.1" stroke-linecap="round" stroke-linejoin="round"/></svg>
<svg class="b" style="left:206.90px;top:28.00px;" width="13" height="12.5" viewBox="0 0 13 12.5"><rect x="0" y="0" width="8.9" height="7.9" rx="1" fill="#4f9de6"/>
<circle cx="8.3" cy="7.6" r="4.1" fill="#fff" stroke="#555" stroke-width="1"/></svg>
<span class="t" style="left:222.70px;top:31.00px;font-size:9.1px;line-height:9.1px;color:#303030;letter-spacing:-0.544px;">Shapes</span>
<svg class="b" style="left:253.70px;top:33.45px;" width="3.8" height="1.9" viewBox="0 0 3.8 1.9"><path d="M0 0 L1.9 1.9 L3.8 0" fill="none" stroke="#444" stroke-width="1.1" stroke-linecap="round" stroke-linejoin="round"/></svg>
<svg class="b" style="left:206.90px;top:47.20px;" width="12" height="13" viewBox="0 0 12 13"><path d="M0.2 2.6 C2.2 3.4 3.4 3 4.4 1.6 C5.4 0 8 0 8.6 1.6 L10.8 2.4 L8.8 3.6 C8.8 6.6 6 8.6 3.2 8.2 C1.6 7.6 0.6 5.6 0.2 2.6 Z" fill="#3f95e2"/>
<path d="M4.2 12 C4.6 8.4 7.2 6.6 11.2 6.4 C11.2 10 9 12 4.2 12 Z M3.4 12.6 L8.6 8.4" fill="#fff" stroke="#555" stroke-width=".9" stroke-linejoin="round"/></svg>
<span class="t" style="left:222.70px;top:51.00px;font-size:9.1px;line-height:9.1px;color:#303030;letter-spacing:-0.170px;">Icons</span>
<svg class="b" style="left:208.20px;top:67.60px;" width="10" height="11.4" viewBox="0 0 10 11.4"><path d="M5 0.5 L9.5 2.9 V8.4 L5 10.9 L0.5 8.4 V2.9 Z M0.5 2.9 L5 5.4 L9.5 2.9 M5 5.4 V10.9" fill="#fff" stroke="#2f8ad6" stroke-width="1" stroke-linejoin="round"/></svg>
<span class="t" style="left:222.70px;top:70.00px;font-size:9.1px;line-height:9.1px;color:#303030;letter-spacing:-0.177px;">3D Models</span>
<svg class="b" style="left:274.80px;top:72.55px;" width="3.8" height="1.9" viewBox="0 0 3.8 1.9"><path d="M0 0 L1.9 1.9 L3.8 0" fill="none" stroke="#444" stroke-width="1.1" stroke-linecap="round" stroke-linejoin="round"/></svg>
<svg class="b" style="left:288.30px;top:29.30px;" width="12.5" height="9" viewBox="0 0 12.5 9"><path d="M0 0 H7.6 L10.8 3.4 L7.6 6.3 H0 L2.6 3.2 Z" fill="#3ea55a"/>
<rect x="4.6" y="4.1" width="7.4" height="4.4" fill="#e9e9e9" stroke="#5a5a5a" stroke-width=".9"/>
<path d="M6.4 6.3 H10.2" stroke="#777" stroke-width=".8"/></svg>
<span class="t" style="left:303.50px;top:31.00px;font-size:9.1px;line-height:9.1px;color:#303030;letter-spacing:-0.075px;">SmartArt</span>
<svg class="b" style="left:287.80px;top:47.40px;" width="13" height="12.6" viewBox="0 0 13 12.6"><path d="M2.4 6.4 V0.5 H11 V10.4" fill="none" stroke="#555" stroke-width=".9" stroke-dasharray="1.6 1.1"/>
<rect x="0.5" y="7.4" width="7.8" height="4.5" rx=".7" fill="#e6e6e6" stroke="#555" stroke-width=".9"/>
<circle cx="4.4" cy="9.7" r="1.3" fill="#fff" stroke="#555" stroke-width=".7"/>
<path d="M9.2 10.6 H12.4 M10.8 9 V12.2" stroke="#2e9a4e" stroke-width=".9"/></svg>
<span class="t" style="left:303.50px;top:51.00px;font-size:9.1px;line-height:9.1px;color:#303030;letter-spacing:-0.243px;">Screenshot</span>
<svg class="b" style="left:350.50px;top:52.95px;" width="3.8" height="1.9" viewBox="0 0 3.8 1.9"><path d="M0 0 L1.9 1.9 L3.8 0" fill="none" stroke="#444" stroke-width="1.1" stroke-linecap="round" stroke-linejoin="round"/></svg>
<span class="t" style="left:241.70px;top:86.00px;font-size:8.6px;line-height:8.6px;color:#4a4a4a;letter-spacing:0.146px;">Illustrations</span>
<div class="b" style="left:367.90px;top:25.80px;width:1.00px;height:66.70px;background:#d6d6d6;"></div>
<svg class="b" style="left:396.50px;top:28.80px;" width="22" height="21" viewBox="0 0 22 21"><rect x="0.5" y="0.5" width="6.8" height="20" fill="#c9c7c5" stroke="#8a8a8a" stroke-width=".9"/>
<rect x="7.3" y="7.8" width="4.8" height="12.7" fill="#fff" stroke="#777" stroke-width=".9"/>
<path d="M14.3 4.6 C14.3 0.8 20.9 0.8 20.9 4.6 C20.9 7 17.6 7.2 17.6 10" fill="none" stroke="#2f8ad6" stroke-width="1.15"/>
<circle cx="17.6" cy="12.3" r=".9" fill="#2f8ad6"/></svg>
<span class="t" style="left:376.60px;top:56.00px;font-size:9.1px;line-height:9.1px;color:#303030;letter-spacing:-0.128px;">Recommended</span>
<span class="t" style="left:394.90px;top:68.00px;font-size:9.1px;line-height:9.1px;color:#303030;letter-spacing:-0.301px;">Charts</span>
<svg class="b" style="left:476.40px;top:28.10px;" width="12" height="11.6" viewBox="0 0 12 11.6"><rect x="0.4" y="0.4" width="5" height="10.8" fill="#c9c7c5" stroke="#8a8a8a" stroke-width=".8"/>
<rect x="5.4" y="0.4" width="6.2" height="6.6" fill="#fff" stroke="#777" stroke-width=".8"/>
<rect x="5.4" y="7" width="6.2" height="4.2" fill="#6cb0ea" stroke="#2f8ad6" stroke-width=".8"/></svg>
<svg class="b" style="left:492.80px;top:33.45px;" width="3.8" height="1.9" viewBox="0 0 3.8 1.9"><path d="M0 0 L1.9 1.9 L3.8 0" fill="none" stroke="#444" stroke-width="1.1" stroke-linecap="round" stroke-linejoin="round"/></svg>
<svg class="b" style="left:507.90px;top:28.10px;" width="12.4" height="11.6" viewBox="0 0 12.4 11.6"><path d="M0.5 11.2 V5.2 H4.6 V0.5 H9 V7 H4.6" fill="none" stroke="#686868" stroke-width="1.1"/>
<path d="M2.6 11.2 V7 M6.8 0.5 V7" fill="none" stroke="#aaa" stroke-width=".9"/>
<rect x="9.4" y="7" width="2.6" height="4.2" fill="#6cb0ea" stroke="#2f8ad6" stroke-width=".8"/></svg>
<svg class="b" style="left:524.60px;top:33.45px;" width="3.8" height="1.9" viewBox="0 0 3.8 1.9"><path d="M0 0 L1.9 1.9 L3.8 0" fill="none" stroke="#444" stroke-width="1.1" stroke-linecap="round" stroke-linejoin="round"/></svg>
<svg class="b" style="left:0.00px;top:0.00px;" width="800" height="60" viewBox="0 0 800 60"><circle cx="553.3" cy="37" r="7.2" fill="#fff" stroke="#6a6a6a" stroke-width="1"/>
<path d="M544.6 43.4 A9.4 9.4 0 0 1 553.6 28.3" fill="none" stroke="#6a6a6a" stroke-width="1"/>
<path d="M548.4 33.4 L551.6 31.2 L553.4 33 L552 35.4 L553.2 37.6 L550.6 38.2 L549.6 41 L547.6 39.6 L547 36.4 Z M554.6 31.4 L557.6 32 L559.4 35 L559.2 37.4 L556.6 36 L554.8 36.6 L553.8 34.4 Z M551.8 40.2 L555.2 39.4 L557.6 40.6 L556.6 43.4 L552.6 43.6 Z" fill="#2e9a4e"/></svg>
<svg class="b" style="left:582.00px;top:28.40px;" width="23" height="18" viewBox="0 0 23 18"><rect x="0.5" y="0.5" width="20.6" height="19" fill="#fff" stroke="#6b6b6b"/>
<rect x="2.4" y="3.1" width="4.2" height="3.6" fill="#c9c7c5" stroke="#a9a9a9" stroke-width=".6"/>
<rect x="8.5" y="3.1" width="10.3" height="3.6" fill="#c9c7c5" stroke="#a9a9a9" stroke-width=".6"/>
<rect x="2.4" y="8.7" width="4.2" height="9" fill="#c9c7c5" stroke="#a9a9a9" stroke-width=".6"/>
<rect x="14.4" y="11.1" width="4.4" height="8" fill="#fff" stroke="#666" stroke-width=".8"/>
<rect x="19.3" y="12.6" width="3.2" height="6" fill="#2f8ad6"/></svg>
<svg class="b" style="left:614.20px;top:87.20px;" width="5.4" height="5.6" viewBox="0 0 5.4 5.6"><path d="M0.5 2 V0.5 H2 M1.8 1.8 L4.4 4.4 M4.9 2.2 V4.9 H2.2" fill="none" stroke="#555" stroke-width="1"/></svg>
<div class="b" style="left:621.00px;top:25.80px;width:1.00px;height:66.70px;background:#d6d6d6;"></div>
<svg class="b" style="left:633.20px;top:28.40px;" width="24" height="23.4" viewBox="0 0 24 23.4"><path d="M0.5 9 L3.4 7.9 V19.4 L0.5 18.6 Z" fill="#e8e8e8" stroke="#888" stroke-width=".8"/>
<rect x="3.4" y="7.9" width="3.6" height="11.5" fill="#c9c7c5" stroke="#888" stroke-width=".8"/>
<path d="M8.2 3 L12.2 0.5 V20 L8.2 19 Z" fill="#ececec" stroke="#888" stroke-width=".8"/>
<rect x="12.2" y="0.5" width="2.4" height="19.5" fill="#c9c7c5" stroke="#888" stroke-width=".6"/>
<path d="M12.4 0.4 L17 2.2 V13 L14.6 13 V2 Z" fill="#2f8ad6"/>
<circle cx="17.5" cy="17" r="5.9" fill="#2f8ad6"/>
<path d="M11.8 17 H23.2 M17.5 11.2 V22.8 M12.8 14 H22.2 M12.8 20 H22.2 M17.5 11.2 C14 14 14 20 17.5 22.8 M17.5 11.2 C21 14 21 20 17.5 22.8" fill="none" stroke="#fff" stroke-width=".7"/></svg>
<span class="t" style="left:638.60px;top:56.00px;font-size:9.1px;line-height:9.1px;color:#303030;letter-spacing:-0.817px;">3D</span>
<span class="t" style="left:631.10px;top:68.00px;font-size:9.1px;line-height:9.1px;color:#303030;letter-spacing:-0.334px;">Map</span>
<svg class="b" style="left:651.50px;top:70.45px;" width="3.8" height="1.9" viewBox="0 0 3.8 1.9"><path d="M0 0 L1.9 1.9 L3.8 0" fill="none" stroke="#444" stroke-width="1.1" stroke-linecap="round" stroke-linejoin="round"/></svg>
<span class="t" style="left:633.80px;top:86.00px;font-size:8.6px;line-height:8.6px;color:#4a4a4a;letter-spacing:-0.186px;">Tours</span>
<div class="b" style="left:665.30px;top:25.80px;width:1.00px;height:66.70px;background:#d6d6d6;"></div>
<svg class="b" style="left:0.00px;top:0.00px;" width="800" height="60" viewBox="0 0 800 60"><path d="M677 33.4 H698.8 M677 45.1 H698.8" stroke="#5f5f5f" stroke-width="1" fill="none"/><path d="M680.6 29.9 V48.1" stroke="#5f5f5f" stroke-width="1" fill="none"/><path d="M681.6 41.4 L684.6 37.2 L688 41.6 L691.2 37 L694.2 41.4 L697.2 36.8 L698.6 39" fill="none" stroke="#2f8ad6" stroke-width="1"/><path d="M712.9 33.4 H734.6999999999999 M712.9 45.1 H734.6999999999999" stroke="#5f5f5f" stroke-width="1" fill="none"/><path d="M716.5 29.9 V48.1" stroke="#5f5f5f" stroke-width="1" fill="none"/><rect x="718.3" y="38.7" width="3" height="5.2" fill="#6cb0ea" stroke="#2f8ad6" stroke-width=".7"/><rect x="723" y="35.5" width="3.2" height="8.4" fill="#6cb0ea" stroke="#2f8ad6" stroke-width=".7"/><rect x="727.9" y="36.9" width="2.8" height="7" fill="#6cb0ea" stroke="#2f8ad6" stroke-width=".7"/><path d="M748.5 33.4 H770.3 M748.5 45.1 H770.3" stroke="#5f5f5f" stroke-width="1" fill="none"/><path d="M752.1 29.9 V48.1" stroke="#5f5f5f" stroke-width="1" fill="none"/><rect x="754" y="35.5" width="1.9" height="3.4" fill="#2f8ad6"/><rect x="757" y="35.5" width="1.9" height="3.4" fill="#2f8ad6"/><rect x="760.2" y="39.4" width="1.9" height="3.2" fill="#666"/><rect x="763.4" y="39.4" width="1.9" height="3.2" fill="#666"/><rect x="766.3" y="35.5" width="1.9" height="3.4" fill="#2f8ad6"/></svg>
<span class="t" style="left:679.80px;top:56.00px;font-size:9.1px;line-height:9.1px;color:#303030;letter-spacing:-0.151px;">Line</span>
<span class="t" style="left:707.30px;top:56.00px;font-size:9.1px;line-height:9.1px;color:#303030;letter-spacing:0.074px;">Column</span>
<span class="t" style="left:749.60px;top:56.00px;font-size:9.1px;line-height:9.1px;color:#303030;letter-spacing:0.175px;">Win/</span>
<span class="t" style="left:750.50px;top:68.00px;font-size:9.1px;line-height:9.1px;color:#303030;letter-spacing:-0.656px;">Loss</span>
<span class="t" style="left:703.40px;top:86.00px;font-size:8.6px;line-height:8.6px;color:#4a4a4a;letter-spacing:-0.095px;">Sparklines</span>
<div class="b" style="left:780.30px;top:25.80px;width:1.00px;height:66.70px;background:#d6d6d6;"></div>
<svg class="b" style="left:792.10px;top:28.90px;overflow:hidden;" width="10" height="21" viewBox="0 0 10 21"><rect x="0.5" y="0.5" width="20" height="20" fill="#fff" stroke="#555" stroke-width="1"/>
<path d="M0.5 2.6 H12" stroke="#555" stroke-width="1"/>
<rect x="3.4" y="6.3" width="10" height="3.3" fill="#6cb0ea" stroke="#2f8ad6" stroke-width=".7"/>
<rect x="3.4" y="12.7" width="10" height="3.4" fill="#c9c7c5" stroke="#999" stroke-width=".7"/></svg>
<span class="t" style="left:792.50px;top:56.00px;font-size:9.1px;line-height:9.1px;color:#303030;">Sl</span>
<div class="b" style="left:421.60px;top:290.90px;width:363.70px;height:218.30px;background:#fff;border:1px solid #7a7a7a;"></div>
<span class="t" style="left:569.23px;top:301.00px;font-size:12.4px;line-height:12.4px;color:#595959;letter-spacing:0.550px;">Chart Title</span>
<span class="t" style="left:466.00px;top:455.00px;font-size:8.6px;line-height:8.6px;color:#595959;letter-spacing:-0.424px;">$-</span>
<span class="t" style="left:442.80px;top:437.00px;font-size:8.6px;line-height:8.6px;color:#595959;letter-spacing:-0.184px;">$200,000</span>
<span class="t" style="left:442.80px;top:420.00px;font-size:8.6px;line-height:8.6px;color:#595959;letter-spacing:-0.184px;">$400,000</span>
<span class="t" style="left:442.80px;top:402.00px;font-size:8.6px;line-height:8.6px;color:#595959;letter-spacing:-0.184px;">$600,000</span>
<span class="t" style="left:442.80px;top:384.00px;font-size:8.6px;line-height:8.6px;color:#595959;letter-spacing:-0.184px;">$800,000</span>
<span class="t" style="left:436.00px;top:367.00px;font-size:8.6px;line-height:8.6px;color:#595959;letter-spacing:-0.184px;">$1,000,000</span>
<span class="t" style="left:436.00px;top:349.00px;font-size:8.6px;line-height:8.6px;color:#595959;letter-spacing:-0.184px;">$1,200,000</span>
<span class="t" style="left:436.00px;top:331.00px;font-size:8.6px;line-height:8.6px;color:#595959;letter-spacing:-0.184px;">$1,400,000</span>
<svg class="b" style="left:0.00px;top:0.00px;" width="800" height="515" viewBox="0 0 800 515"><path d="M485.8 460.1 L493.3 455.5 H765.5" fill="none" stroke="#d9d9d9" stroke-width="1"/><path d="M485.8 442.2 L493.3 437.6 H765.5" fill="none" stroke="#d9d9d9" stroke-width="1"/><path d="M485.8 424.3 L493.3 419.7 H765.5" fill="none" stroke="#d9d9d9" stroke-width="1"/><path d="M485.8 406.4 L493.3 401.8 H765.5" fill="none" stroke="#d9d9d9" stroke-width="1"/><path d="M485.8 388.5 L493.3 383.9 H765.5" fill="none" stroke="#d9d9d9" stroke-width="1"/><path d="M485.8 370.6 L493.3 366.0 H765.5" fill="none" stroke="#d9d9d9" stroke-width="1"/><path d="M485.8 352.7 L493.3 348.1 H765.5" fill="none" stroke="#d9d9d9" stroke-width="1"/><path d="M485.8 334.8 L493.3 330.2 H765.5" fill="none" stroke="#d9d9d9" stroke-width="1"/><path d="M500.20 346.23 l1.9 -1.9 V457.20 L500.20 458.70 Z" fill="#2f5597"/><path d="M493.80 346.23 l1.9 -1.9 h6.4 l-1.9 1.9 Z" fill="#5b86d4"/><rect x="493.80" y="346.23" width="6.40" height="112.47" fill="#4472c4"/><path d="M506.80 346.84 l1.9 -1.9 V457.20 L506.80 458.70 Z" fill="#a5541a"/><path d="M500.20 346.84 l1.9 -1.9 h6.6 l-1.9 1.9 Z" fill="#f19a5c"/><rect x="500.20" y="346.84" width="6.60" height="111.86" fill="#ed7d31"/><path d="M522.94 377.64 l1.9 -1.9 V457.20 L522.94 458.70 Z" fill="#2f5597"/><path d="M516.54 377.64 l1.9 -1.9 h6.4 l-1.9 1.9 Z" fill="#5b86d4"/><rect x="516.54" y="377.64" width="6.40" height="81.06" fill="#4472c4"/><path d="M529.54 365.88 l1.9 -1.9 V457.20 L529.54 458.70 Z" fill="#a5541a"/><path d="M522.94 365.88 l1.9 -1.9 h6.6 l-1.9 1.9 Z" fill="#f19a5c"/><rect x="522.94" y="365.88" width="6.60" height="92.82" fill="#ed7d31"/><path d="M545.68 351.28 l1.9 -1.9 V457.20 L545.68 458.70 Z" fill="#2f5597"/><path d="M539.28 351.28 l1.9 -1.9 h6.4 l-1.9 1.9 Z" fill="#5b86d4"/><rect x="539.28" y="351.28" width="6.40" height="107.42" fill="#4472c4"/><path d="M552.28 341.35 l1.9 -1.9 V457.20 L552.28 458.70 Z" fill="#a5541a"/><path d="M545.68 341.35 l1.9 -1.9 h6.6 l-1.9 1.9 Z" fill="#f19a5c"/><rect x="545.68" y="341.35" width="6.60" height="117.35" fill="#ed7d31"/><path d="M568.42 339.55 l1.9 -1.9 V457.20 L568.42 458.70 Z" fill="#2f5597"/><path d="M562.02 339.55 l1.9 -1.9 h6.4 l-1.9 1.9 Z" fill="#5b86d4"/><rect x="562.02" y="339.55" width="6.40" height="119.15" fill="#4472c4"/><path d="M575.02 366.09 l1.9 -1.9 V457.20 L575.02 458.70 Z" fill="#a5541a"/><path d="M568.42 366.09 l1.9 -1.9 h6.6 l-1.9 1.9 Z" fill="#f19a5c"/><rect x="568.42" y="366.09" width="6.60" height="92.61" fill="#ed7d31"/><path d="M591.16 386.65 l1.9 -1.9 V457.20 L591.16 458.70 Z" fill="#2f5597"/><path d="M584.76 386.65 l1.9 -1.9 h6.4 l-1.9 1.9 Z" fill="#5b86d4"/><rect x="584.76" y="386.65" width="6.40" height="72.05" fill="#4472c4"/><path d="M597.76 391.44 l1.9 -1.9 V457.20 L597.76 458.70 Z" fill="#a5541a"/><path d="M591.16 391.44 l1.9 -1.9 h6.6 l-1.9 1.9 Z" fill="#f19a5c"/><rect x="591.16" y="391.44" width="6.60" height="67.26" fill="#ed7d31"/><path d="M613.90 341.19 l1.9 -1.9 V457.20 L613.90 458.70 Z" fill="#2f5597"/><path d="M607.50 341.19 l1.9 -1.9 h6.4 l-1.9 1.9 Z" fill="#5b86d4"/><rect x="607.50" y="341.19" width="6.40" height="117.51" fill="#4472c4"/><path d="M620.50 367.55 l1.9 -1.9 V457.20 L620.50 458.70 Z" fill="#a5541a"/><path d="M613.90 367.55 l1.9 -1.9 h6.6 l-1.9 1.9 Z" fill="#f19a5c"/><rect x="613.90" y="367.55" width="6.60" height="91.15" fill="#ed7d31"/><path d="M636.64 374.64 l1.9 -1.9 V457.20 L636.64 458.70 Z" fill="#2f5597"/><path d="M630.24 374.64 l1.9 -1.9 h6.4 l-1.9 1.9 Z" fill="#5b86d4"/><rect x="630.24" y="374.64" width="6.40" height="84.06" fill="#4472c4"/><path d="M643.24 361.80 l1.9 -1.9 V457.20 L643.24 458.70 Z" fill="#a5541a"/><path d="M636.64 361.80 l1.9 -1.9 h6.6 l-1.9 1.9 Z" fill="#f19a5c"/><rect x="636.64" y="361.80" width="6.60" height="96.90" fill="#ed7d31"/><path d="M659.38 366.22 l1.9 -1.9 V457.20 L659.38 458.70 Z" fill="#2f5597"/><path d="M652.98 366.22 l1.9 -1.9 h6.4 l-1.9 1.9 Z" fill="#5b86d4"/><rect x="652.98" y="366.22" width="6.40" height="92.48" fill="#4472c4"/><path d="M665.98 373.49 l1.9 -1.9 V457.20 L665.98 458.70 Z" fill="#a5541a"/><path d="M659.38 373.49 l1.9 -1.9 h6.6 l-1.9 1.9 Z" fill="#f19a5c"/><rect x="659.38" y="373.49" width="6.60" height="85.21" fill="#ed7d31"/><path d="M682.12 354.88 l1.9 -1.9 V457.20 L682.12 458.70 Z" fill="#2f5597"/><path d="M675.72 354.88 l1.9 -1.9 h6.4 l-1.9 1.9 Z" fill="#5b86d4"/><rect x="675.72" y="354.88" width="6.40" height="103.82" fill="#4472c4"/><path d="M688.72 386.68 l1.9 -1.9 V457.20 L688.72 458.70 Z" fill="#a5541a"/><path d="M682.12 386.68 l1.9 -1.9 h6.6 l-1.9 1.9 Z" fill="#f19a5c"/><rect x="682.12" y="386.68" width="6.60" height="72.02" fill="#ed7d31"/><path d="M704.86 339.47 l1.9 -1.9 V457.20 L704.86 458.70 Z" fill="#2f5597"/><path d="M698.46 339.47 l1.9 -1.9 h6.4 l-1.9 1.9 Z" fill="#5b86d4"/><rect x="698.46" y="339.47" width="6.40" height="119.23" fill="#4472c4"/><path d="M711.46 388.70 l1.9 -1.9 V457.20 L711.46 458.70 Z" fill="#a5541a"/><path d="M704.86 388.70 l1.9 -1.9 h6.6 l-1.9 1.9 Z" fill="#f19a5c"/><rect x="704.86" y="388.70" width="6.60" height="70.00" fill="#ed7d31"/><path d="M727.60 341.35 l1.9 -1.9 V457.20 L727.60 458.70 Z" fill="#2f5597"/><path d="M721.20 341.35 l1.9 -1.9 h6.4 l-1.9 1.9 Z" fill="#5b86d4"/><rect x="721.20" y="341.35" width="6.40" height="117.35" fill="#4472c4"/><path d="M734.20 351.28 l1.9 -1.9 V457.20 L734.20 458.70 Z" fill="#a5541a"/><path d="M727.60 351.28 l1.9 -1.9 h6.6 l-1.9 1.9 Z" fill="#f19a5c"/><rect x="727.60" y="351.28" width="6.60" height="107.42" fill="#ed7d31"/><path d="M750.34 373.49 l1.9 -1.9 V457.20 L750.34 458.70 Z" fill="#2f5597"/><path d="M743.94 373.49 l1.9 -1.9 h6.4 l-1.9 1.9 Z" fill="#5b86d4"/><rect x="743.94" y="373.49" width="6.40" height="85.21" fill="#4472c4"/><path d="M756.94 388.70 l1.9 -1.9 V457.20 L756.94 458.70 Z" fill="#a5541a"/><path d="M750.34 388.70 l1.9 -1.9 h6.6 l-1.9 1.9 Z" fill="#f19a5c"/><rect x="750.34" y="388.70" width="6.60" height="70.00" fill="#ed7d31"/></svg>
<span class="t" style="left:492.20px;top:467.00px;font-size:8.6px;line-height:8.6px;color:#595959;letter-spacing:-0.422px;">Jan</span>
<span class="t" style="left:514.60px;top:467.00px;font-size:8.6px;line-height:8.6px;color:#595959;letter-spacing:-0.540px;">Feb</span>
<span class="t" style="left:536.70px;top:467.00px;font-size:8.6px;line-height:8.6px;color:#595959;letter-spacing:-0.137px;">Mar</span>
<span class="t" style="left:560.10px;top:467.00px;font-size:8.6px;line-height:8.6px;color:#595959;letter-spacing:-0.128px;">Apr</span>
<span class="t" style="left:581.50px;top:467.00px;font-size:8.6px;line-height:8.6px;color:#595959;letter-spacing:-0.216px;">May</span>
<span class="t" style="left:605.70px;top:467.00px;font-size:8.6px;line-height:8.6px;color:#595959;letter-spacing:-0.422px;">Jun</span>
<span class="t" style="left:629.90px;top:467.00px;font-size:8.6px;line-height:8.6px;color:#595959;letter-spacing:-0.465px;">Jul</span>
<span class="t" style="left:650.30px;top:467.00px;font-size:8.6px;line-height:8.6px;color:#595959;letter-spacing:-0.368px;">Aug</span>
<span class="t" style="left:673.70px;top:467.00px;font-size:8.6px;line-height:8.6px;color:#595959;letter-spacing:-0.834px;">Sep</span>
<span class="t" style="left:696.20px;top:467.00px;font-size:8.6px;line-height:8.6px;color:#595959;letter-spacing:-0.059px;">Oct</span>
<span class="t" style="left:718.20px;top:467.00px;font-size:8.6px;line-height:8.6px;color:#595959;letter-spacing:-0.231px;">Nov</span>
<span class="t" style="left:741.50px;top:467.00px;font-size:8.6px;line-height:8.6px;color:#595959;letter-spacing:-0.631px;">Dec</span>
<div class="b" style="left:552.50px;top:490.60px;width:5.00px;height:5.00px;background:#4472c4;"></div>
<span class="t" style="left:562.00px;top:489.00px;font-size:8.6px;line-height:8.6px;color:#595959;letter-spacing:-0.179px;">Product 1</span>
<div class="b" style="left:608.90px;top:490.60px;width:5.00px;height:5.00px;background:#ed7d31;"></div>
<span class="t" style="left:618.60px;top:489.00px;font-size:8.6px;line-height:8.6px;color:#595959;letter-spacing:-0.157px;">Product 2</span>
<svg class="b" style="left:0.00px;top:0.00px;" width="800" height="515" viewBox="0 0 800 515"><circle cx="422.1" cy="291.4" r="3.4" fill="#fff" stroke="#555" stroke-width="1.3"/><circle cx="603.4" cy="291.4" r="3.4" fill="#fff" stroke="#555" stroke-width="1.3"/><circle cx="784.8" cy="291.4" r="3.4" fill="#fff" stroke="#555" stroke-width="1.3"/><circle cx="422.1" cy="400" r="3.4" fill="#fff" stroke="#555" stroke-width="1.3"/><circle cx="784.8" cy="400" r="3.4" fill="#fff" stroke="#555" stroke-width="1.3"/><circle cx="422.1" cy="508.7" r="3.4" fill="#fff" stroke="#555" stroke-width="1.3"/><circle cx="603.4" cy="508.7" r="3.4" fill="#fff" stroke="#555" stroke-width="1.3"/><circle cx="784.8" cy="508.7" r="3.4" fill="#fff" stroke="#555" stroke-width="1.3"/></svg>
<div class="b" style="left:441.30px;top:25.00px;width:29.60px;height:18.60px;background:#dcdcdc;border:1px solid #7e7e7e;border-radius:3px;"></div>
<svg class="b" style="left:444.30px;top:28.00px;" width="13" height="12" viewBox="0 0 13 12"><rect x="0.4" y="5.4" width="3.8" height="6.2" fill="#c9c7c5" stroke="#8a8a8a" stroke-width=".8"/>
<rect x="4.2" y="0.4" width="4.3" height="11.2" fill="#fff" stroke="#666" stroke-width=".8"/>
<rect x="8.5" y="2.8" width="3.8" height="8.8" fill="#6cb0ea" stroke="#2f8ad6" stroke-width=".8"/></svg>
<svg class="b" style="left:460.90px;top:33.25px;" width="3.8" height="1.9" viewBox="0 0 3.8 1.9"><path d="M0 0 L1.9 1.9 L3.8 0" fill="none" stroke="#444" stroke-width="1.1" stroke-linecap="round" stroke-linejoin="round"/></svg>
<div class="b" style="left:441.50px;top:43.20px;width:171.90px;height:310.30px;background:#fff;border:1px solid #8e8e8e;border-radius:0 4.5px 4.5px 4.5px;box-shadow:0 2px 7px rgba(0,0,0,.28);"></div>
<svg class="b" style="left:434.40px;top:21.90px;filter:drop-shadow(-1.6px -0.8px 1.4px rgba(0,0,0,.3));" width="39.20" height="24.70" viewBox="0 0 39.20 24.70"><rect x="1.20" y="1.20" width="36.80" height="22.30" fill="none" stroke="#f83a3c" stroke-width="2.4"/></svg>
<span class="t" style="left:453.60px;top:51.00px;font-size:9.0px;line-height:9.0px;color:#2f2f2f;font-weight:700;letter-spacing:-0.080px;">2-D Column</span>
<span class="t" style="left:453.60px;top:123.00px;font-size:9.0px;line-height:9.0px;color:#2f2f2f;font-weight:700;letter-spacing:-0.080px;">3-D Column</span>
<span class="t" style="left:453.60px;top:195.00px;font-size:9.0px;line-height:9.0px;color:#2f2f2f;font-weight:700;letter-spacing:-0.073px;">2-D Bar</span>
<span class="t" style="left:453.60px;top:266.00px;font-size:9.0px;line-height:9.0px;color:#2f2f2f;font-weight:700;letter-spacing:-0.073px;">3-D Bar</span>
<div class="b" style="left:442.60px;top:115.00px;width:169.60px;height:1.00px;background:#e3e3e3;"></div>
<div class="b" style="left:442.60px;top:186.70px;width:169.60px;height:1.00px;background:#e3e3e3;"></div>
<div class="b" style="left:442.60px;top:258.40px;width:169.60px;height:1.00px;background:#e3e3e3;"></div>
<div class="b" style="left:442.60px;top:329.90px;width:169.60px;height:1.00px;background:#e3e3e3;"></div>
<div class="b" style="left:441.60px;top:136.00px;width:48.60px;height:45.20px;background:#dedede;"></div>
<div class="b" style="left:442.40px;top:137.20px;width:43.00px;height:43.20px;background:#ebebeb;border:1px solid #f6f6f6;"></div>
<svg class="b" style="left:0.00px;top:0.00px;" width="800" height="515" viewBox="0 0 800 515"><path d="M447.4 70.4 V103.5 H480.6 M490.2 70.4 V103.5 H522.6 M532.4 70.4 V103.5 H565.1" fill="none" stroke="#606060" stroke-width="1"/><rect x="451.40" y="79.50" width="5.60" height="24.00" fill="#86bdee" stroke="#2e8ad8" stroke-width="0.9"/><rect x="457.00" y="88.60" width="5.40" height="14.90" fill="#fafafa" stroke="#6a6a6a" stroke-width="0.9"/><rect x="465.70" y="84.20" width="5.50" height="19.30" fill="#c8c6c4" stroke="#8c8c8c" stroke-width="0.9"/><rect x="471.20" y="72.90" width="5.20" height="30.60" fill="#fafafa" stroke="#6a6a6a" stroke-width="0.9"/><rect x="494.60" y="93.90" width="8.40" height="9.60" fill="#fafafa" stroke="#6a6a6a" stroke-width="0.9"/><rect x="494.60" y="82.10" width="8.40" height="11.80" fill="#86bdee" stroke="#2e8ad8" stroke-width="0.9"/><rect x="508.60" y="88.60" width="8.10" height="14.90" fill="#fafafa" stroke="#6a6a6a" stroke-width="0.9"/><rect x="508.60" y="74.30" width="8.10" height="14.30" fill="#c8c6c4" stroke="#8c8c8c" stroke-width="0.9"/><rect x="537.10" y="95.30" width="8.40" height="8.20" fill="#fafafa" stroke="#6a6a6a" stroke-width="0.9"/><rect x="537.10" y="74.30" width="8.40" height="21.00" fill="#86bdee" stroke="#2e8ad8" stroke-width="0.9"/><rect x="550.60" y="84.40" width="8.40" height="19.10" fill="#fafafa" stroke="#6a6a6a" stroke-width="0.9"/><rect x="550.60" y="74.30" width="8.40" height="10.10" fill="#c8c6c4" stroke="#8c8c8c" stroke-width="0.9"/><path d="M450.8 142.1 V167.5 H480.4 M450.8 167.5 L447.5 171.9" fill="none" stroke="#606060" stroke-width="1"/><path d="M457.90 157.50 l2.1 -2.1 V172.90 L457.90 175.00 Z" fill="#e4e4e4" stroke="#6a6a6a" stroke-width=".8" stroke-linejoin="round"/><path d="M452.90 157.50 l2.1 -2.1 H460.00 L457.90 157.50 Z" fill="#fafafa" stroke="#6a6a6a" stroke-width=".8" stroke-linejoin="round"/><rect x="452.90" y="157.50" width="5.00" height="17.50" fill="#fafafa" stroke="#6a6a6a" stroke-width="0.8"/><path d="M463.30 150.00 l2.1 -2.1 V172.70 L463.30 174.80 Z" fill="#5ea6e6" stroke="#2e8ad8" stroke-width=".8" stroke-linejoin="round"/><path d="M458.30 150.00 l2.1 -2.1 H465.40 L463.30 150.00 Z" fill="#86bdee" stroke="#2e8ad8" stroke-width=".8" stroke-linejoin="round"/><rect x="458.30" y="150.00" width="5.00" height="24.80" fill="#86bdee" stroke="#2e8ad8" stroke-width="0.8"/><path d="M472.30 153.10 l2.1 -2.1 V172.90 L472.30 175.00 Z" fill="#e4e4e4" stroke="#6a6a6a" stroke-width=".8" stroke-linejoin="round"/><path d="M467.90 153.10 l2.1 -2.1 H474.40 L472.30 153.10 Z" fill="#fafafa" stroke="#6a6a6a" stroke-width=".8" stroke-linejoin="round"/><rect x="467.90" y="153.10" width="4.40" height="21.90" fill="#fafafa" stroke="#6a6a6a" stroke-width="0.8"/><path d="M477.90 156.50 l2.1 -2.1 V172.50 L477.90 174.60 Z" fill="#b0aeac" stroke="#8c8c8c" stroke-width=".8" stroke-linejoin="round"/><path d="M472.90 156.50 l2.1 -2.1 H480.00 L477.90 156.50 Z" fill="#c8c6c4" stroke="#8c8c8c" stroke-width=".8" stroke-linejoin="round"/><rect x="472.90" y="156.50" width="5.00" height="18.10" fill="#c8c6c4" stroke="#8c8c8c" stroke-width="0.8"/><path d="M494.8 142.1 V166 H522.9 M494.8 166 L490.4 170.3" fill="none" stroke="#606060" stroke-width="1"/><path d="M505.40 166.60 l2.1 -2.1 V172.70 L505.40 174.80 Z" fill="#e4e4e4" stroke="#6a6a6a" stroke-width=".8" stroke-linejoin="round"/><rect x="498.10" y="166.60" width="7.30" height="8.20" fill="#fafafa" stroke="#6a6a6a" stroke-width="0.8"/><path d="M505.40 155.60 l2.1 -2.1 V164.50 L505.40 166.60 Z" fill="#5ea6e6" stroke="#2e8ad8" stroke-width=".8" stroke-linejoin="round"/><path d="M498.10 155.60 l2.1 -2.1 H507.50 L505.40 155.60 Z" fill="#86bdee" stroke="#2e8ad8" stroke-width=".8" stroke-linejoin="round"/><rect x="498.10" y="155.60" width="7.30" height="11.00" fill="#86bdee" stroke="#2e8ad8" stroke-width="0.8"/><path d="M517.50 160.60 l2.1 -2.1 V172.70 L517.50 174.80 Z" fill="#e4e4e4" stroke="#6a6a6a" stroke-width=".8" stroke-linejoin="round"/><rect x="510.40" y="160.60" width="7.10" height="14.20" fill="#fafafa" stroke="#6a6a6a" stroke-width="0.8"/><path d="M517.50 148.80 l2.1 -2.1 V158.50 L517.50 160.60 Z" fill="#5ea6e6" stroke="#2e8ad8" stroke-width=".8" stroke-linejoin="round"/><path d="M510.40 148.80 l2.1 -2.1 H519.60 L517.50 148.80 Z" fill="#86bdee" stroke="#2e8ad8" stroke-width=".8" stroke-linejoin="round"/><rect x="510.40" y="148.80" width="7.10" height="11.80" fill="#86bdee" stroke="#2e8ad8" stroke-width="0.8"/><path d="M536.9 142.1 V166 H565 M536.9 166 L532.3 170.6" fill="none" stroke="#606060" stroke-width="1"/><path d="M547.50 166.60 l2.1 -2.1 V172.90 L547.50 175.00 Z" fill="#e4e4e4" stroke="#6a6a6a" stroke-width=".8" stroke-linejoin="round"/><rect x="540.30" y="166.60" width="7.20" height="8.40" fill="#fafafa" stroke="#6a6a6a" stroke-width="0.8"/><path d="M547.50 148.50 l2.1 -2.1 V164.50 L547.50 166.60 Z" fill="#5ea6e6" stroke="#2e8ad8" stroke-width=".8" stroke-linejoin="round"/><path d="M540.30 148.50 l2.1 -2.1 H549.60 L547.50 148.50 Z" fill="#86bdee" stroke="#2e8ad8" stroke-width=".8" stroke-linejoin="round"/><rect x="540.30" y="148.50" width="7.20" height="18.10" fill="#86bdee" stroke="#2e8ad8" stroke-width="0.8"/><path d="M560.00 155.60 l2.1 -2.1 V172.90 L560.00 175.00 Z" fill="#e4e4e4" stroke="#6a6a6a" stroke-width=".8" stroke-linejoin="round"/><rect x="552.50" y="155.60" width="7.50" height="19.40" fill="#fafafa" stroke="#6a6a6a" stroke-width="0.8"/><path d="M560.00 148.50 l2.1 -2.1 V153.50 L560.00 155.60 Z" fill="#5ea6e6" stroke="#2e8ad8" stroke-width=".8" stroke-linejoin="round"/><path d="M552.50 148.50 l2.1 -2.1 H562.10 L560.00 148.50 Z" fill="#86bdee" stroke="#2e8ad8" stroke-width=".8" stroke-linejoin="round"/><rect x="552.50" y="148.50" width="7.50" height="7.10" fill="#86bdee" stroke="#2e8ad8" stroke-width="0.8"/><path d="M577.5 142.1 V169 H607.5 M577.5 169 L574.4 173.1" fill="none" stroke="#606060" stroke-width="1"/><path d="M588.80 149.40 l2.1 -2.1 V170.40 L588.80 172.50 Z" fill="#5ea6e6" stroke="#2e8ad8" stroke-width=".8" stroke-linejoin="round"/><path d="M583.80 149.40 l2.1 -2.1 H590.90 L588.80 149.40 Z" fill="#86bdee" stroke="#2e8ad8" stroke-width=".8" stroke-linejoin="round"/><rect x="583.80" y="149.40" width="5.00" height="23.10" fill="#86bdee" stroke="#2e8ad8" stroke-width="0.8"/><path d="M602.50 148.50 l2.1 -2.1 V169.80 L602.50 171.90 Z" fill="#5ea6e6" stroke="#2e8ad8" stroke-width=".8" stroke-linejoin="round"/><path d="M597.30 148.50 l2.1 -2.1 H604.60 L602.50 148.50 Z" fill="#86bdee" stroke="#2e8ad8" stroke-width=".8" stroke-linejoin="round"/><rect x="597.30" y="148.50" width="5.20" height="23.40" fill="#86bdee" stroke="#2e8ad8" stroke-width="0.8"/><path d="M584.40 159.40 l1.9 -1.9 V173.10 L584.40 175.00 Z" fill="#e4e4e4" stroke="#6a6a6a" stroke-width=".8" stroke-linejoin="round"/><path d="M579.80 159.40 l1.9 -1.9 H586.30 L584.40 159.40 Z" fill="#fafafa" stroke="#6a6a6a" stroke-width=".8" stroke-linejoin="round"/><rect x="579.80" y="159.40" width="4.60" height="15.60" fill="#fafafa" stroke="#6a6a6a" stroke-width="0.8"/><path d="M598.10 155.00 l1.9 -1.9 V173.10 L598.10 175.00 Z" fill="#e4e4e4" stroke="#6a6a6a" stroke-width=".8" stroke-linejoin="round"/><path d="M592.90 155.00 l1.9 -1.9 H600.00 L598.10 155.00 Z" fill="#fafafa" stroke="#6a6a6a" stroke-width=".8" stroke-linejoin="round"/><rect x="592.90" y="155.00" width="5.20" height="20.00" fill="#fafafa" stroke="#6a6a6a" stroke-width="0.8"/><path d="M447.6 214 V246.6 H481 M490.2 214 V246.6 H522.6 M532.4 214 V246.6 H565.1" fill="none" stroke="#606060" stroke-width="1"/><rect x="447.60" y="217.40" width="30.30" height="5.10" fill="#86bdee" stroke="#2e8ad8" stroke-width="0.9"/><rect x="447.60" y="222.50" width="19.00" height="5.40" fill="#fafafa" stroke="#6a6a6a" stroke-width="0.9"/><rect x="447.60" y="231.30" width="14.50" height="5.20" fill="#c8c6c4" stroke="#8c8c8c" stroke-width="0.9"/><rect x="447.60" y="236.50" width="23.80" height="5.70" fill="#fafafa" stroke="#6a6a6a" stroke-width="0.9"/><rect x="490.20" y="218.40" width="9.80" height="8.00" fill="#fafafa" stroke="#6a6a6a" stroke-width="0.9"/><rect x="500.00" y="218.40" width="12.00" height="8.00" fill="#86bdee" stroke="#2e8ad8" stroke-width="0.9"/><rect x="490.20" y="232.40" width="14.80" height="8.00" fill="#fafafa" stroke="#6a6a6a" stroke-width="0.9"/><rect x="505.00" y="232.40" width="13.00" height="8.00" fill="#c8c6c4" stroke="#8c8c8c" stroke-width="0.9"/><rect x="532.40" y="218.40" width="8.60" height="8.00" fill="#fafafa" stroke="#6a6a6a" stroke-width="0.9"/><rect x="541.00" y="218.40" width="19.00" height="8.00" fill="#86bdee" stroke="#2e8ad8" stroke-width="0.9"/><rect x="532.40" y="232.40" width="15.60" height="8.00" fill="#fafafa" stroke="#6a6a6a" stroke-width="0.9"/><rect x="548.00" y="232.40" width="12.00" height="8.00" fill="#c8c6c4" stroke="#8c8c8c" stroke-width="0.9"/><path d="M454.1 285.9 V315.1 H480.7 M454.1 315.1 L449.4 318.5" fill="none" stroke="#606060" stroke-width="1"/><path d="M472.40 292.80 l2.0 -1.60 V296.80 L472.40 298.40 Z" fill="#5ea6e6" stroke="#2e8ad8" stroke-width=".8" stroke-linejoin="round"/><path d="M447.60 292.80 l2.0 -1.60 H474.40 L472.40 292.80 Z" fill="#86bdee" stroke="#2e8ad8" stroke-width=".8" stroke-linejoin="round"/><rect x="447.60" y="292.80" width="24.80" height="5.60" fill="#86bdee" stroke="#2e8ad8" stroke-width="0.8"/><path d="M464.90 287.60 l2.0 -1.60 V291.00 L464.90 292.60 Z" fill="#e4e4e4" stroke="#6a6a6a" stroke-width=".8" stroke-linejoin="round"/><path d="M447.60 287.60 l2.0 -1.60 H466.90 L464.90 287.60 Z" fill="#fafafa" stroke="#6a6a6a" stroke-width=".8" stroke-linejoin="round"/><rect x="447.60" y="287.60" width="17.30" height="5.00" fill="#fafafa" stroke="#6a6a6a" stroke-width="0.8"/><path d="M465.80 307.70 l2.0 -1.60 V311.10 L465.80 312.70 Z" fill="#5ea6e6" stroke="#2e8ad8" stroke-width=".8" stroke-linejoin="round"/><path d="M447.60 307.70 l2.0 -1.60 H467.80 L465.80 307.70 Z" fill="#86bdee" stroke="#2e8ad8" stroke-width=".8" stroke-linejoin="round"/><rect x="447.60" y="307.70" width="18.20" height="5.00" fill="#86bdee" stroke="#2e8ad8" stroke-width="0.8"/><path d="M469.20 302.50 l2.0 -1.60 V306.10 L469.20 307.70 Z" fill="#e4e4e4" stroke="#6a6a6a" stroke-width=".8" stroke-linejoin="round"/><path d="M447.60 302.50 l2.0 -1.60 H471.20 L469.20 302.50 Z" fill="#fafafa" stroke="#6a6a6a" stroke-width=".8" stroke-linejoin="round"/><rect x="447.60" y="302.50" width="21.60" height="5.20" fill="#fafafa" stroke="#6a6a6a" stroke-width="0.8"/><path d="M496 285.9 V314.2 H522.7 M496 314.2 L491.6 318.3" fill="none" stroke="#606060" stroke-width="1"/><path d="M498.50 290.40 l2.0 -1.60 V296.80 L498.50 298.40 Z" fill="#e4e4e4" stroke="#6a6a6a" stroke-width=".8" stroke-linejoin="round"/><path d="M490.10 290.40 l2.0 -1.60 H500.50 L498.50 290.40 Z" fill="#fafafa" stroke="#6a6a6a" stroke-width=".8" stroke-linejoin="round"/><rect x="490.10" y="290.40" width="8.40" height="8.00" fill="#fafafa" stroke="#6a6a6a" stroke-width="0.8"/><path d="M510.60 290.40 l2.0 -1.60 V296.80 L510.60 298.40 Z" fill="#5ea6e6" stroke="#2e8ad8" stroke-width=".8" stroke-linejoin="round"/><path d="M498.50 290.40 l2.0 -1.60 H512.60 L510.60 290.40 Z" fill="#86bdee" stroke="#2e8ad8" stroke-width=".8" stroke-linejoin="round"/><rect x="498.50" y="290.40" width="12.10" height="8.00" fill="#86bdee" stroke="#2e8ad8" stroke-width="0.8"/><path d="M504.40 302.80 l2.0 -1.60 V309.20 L504.40 310.80 Z" fill="#e4e4e4" stroke="#6a6a6a" stroke-width=".8" stroke-linejoin="round"/><path d="M490.10 302.80 l2.0 -1.60 H506.40 L504.40 302.80 Z" fill="#fafafa" stroke="#6a6a6a" stroke-width=".8" stroke-linejoin="round"/><rect x="490.10" y="302.80" width="14.30" height="8.00" fill="#fafafa" stroke="#6a6a6a" stroke-width="0.8"/><path d="M517.10 302.80 l2.0 -1.60 V309.20 L517.10 310.80 Z" fill="#5ea6e6" stroke="#2e8ad8" stroke-width=".8" stroke-linejoin="round"/><path d="M504.40 302.80 l2.0 -1.60 H519.10 L517.10 302.80 Z" fill="#86bdee" stroke="#2e8ad8" stroke-width=".8" stroke-linejoin="round"/><rect x="504.40" y="302.80" width="12.70" height="8.00" fill="#86bdee" stroke="#2e8ad8" stroke-width="0.8"/><path d="M538.2 285.9 V314.2 H565 M538.2 314.2 L533.9 318.3" fill="none" stroke="#606060" stroke-width="1"/><path d="M539.50 290.40 l2.0 -1.60 V296.80 L539.50 298.40 Z" fill="#e4e4e4" stroke="#6a6a6a" stroke-width=".8" stroke-linejoin="round"/><path d="M532.40 290.40 l2.0 -1.60 H541.50 L539.50 290.40 Z" fill="#fafafa" stroke="#6a6a6a" stroke-width=".8" stroke-linejoin="round"/><rect x="532.40" y="290.40" width="7.10" height="8.00" fill="#fafafa" stroke="#6a6a6a" stroke-width="0.8"/><path d="M558.10 290.40 l2.0 -1.60 V296.80 L558.10 298.40 Z" fill="#5ea6e6" stroke="#2e8ad8" stroke-width=".8" stroke-linejoin="round"/><path d="M539.50 290.40 l2.0 -1.60 H560.10 L558.10 290.40 Z" fill="#86bdee" stroke="#2e8ad8" stroke-width=".8" stroke-linejoin="round"/><rect x="539.50" y="290.40" width="18.60" height="8.00" fill="#86bdee" stroke="#2e8ad8" stroke-width="0.8"/><path d="M546.00 302.80 l2.0 -1.60 V309.20 L546.00 310.80 Z" fill="#e4e4e4" stroke="#6a6a6a" stroke-width=".8" stroke-linejoin="round"/><path d="M532.40 302.80 l2.0 -1.60 H548.00 L546.00 302.80 Z" fill="#fafafa" stroke="#6a6a6a" stroke-width=".8" stroke-linejoin="round"/><rect x="532.40" y="302.80" width="13.60" height="8.00" fill="#fafafa" stroke="#6a6a6a" stroke-width="0.8"/><path d="M558.10 302.80 l2.0 -1.60 V309.20 L558.10 310.80 Z" fill="#5ea6e6" stroke="#2e8ad8" stroke-width=".8" stroke-linejoin="round"/><path d="M546.00 302.80 l2.0 -1.60 H560.10 L558.10 302.80 Z" fill="#86bdee" stroke="#2e8ad8" stroke-width=".8" stroke-linejoin="round"/><rect x="546.00" y="302.80" width="12.10" height="8.00" fill="#86bdee" stroke="#2e8ad8" stroke-width="0.8"/><path d="M452.6 336.2 V347.2 H463.6" fill="none" stroke="#606060" stroke-width=".9"/><rect x="454.10" y="336.40" width="3.30" height="10.80" fill="#86bdee" stroke="#2e8ad8" stroke-width="0.8"/><rect x="457.40" y="339.40" width="2.60" height="7.80" fill="#fafafa" stroke="#666" stroke-width="0.8"/><rect x="460.00" y="341.20" width="2.60" height="6.00" fill="#c8c6c4" stroke="#777" stroke-width="0.8"/></svg>
<span class="t" style="left:471.00px;top:338.00px;font-size:9.1px;line-height:9.1px;color:#2f2f2f;letter-spacing:-0.059px;">More Column Charts...</span>
<div class="b" style="left:471.00px;top:346.40px;width:7.80px;height:0.90px;background:#2f2f2f;"></div>
<svg class="b" style="left:438.30px;top:133.50px;filter:drop-shadow(-1.6px -0.8px 1.4px rgba(0,0,0,.3));" width="54.60" height="50.00" viewBox="0 0 54.60 50.00"><rect x="1.25" y="1.25" width="52.10" height="47.50" fill="none" stroke="#f83a3c" stroke-width="2.5"/></svg>
<div class="b" style="left:480.80px;top:184.20px;width:161.60px;height:107.80px;background:#fff;border:1px solid #c4c4c4;border-radius:4.5px;box-shadow:0 2px 6px rgba(0,0,0,.22);"></div>
<span class="t" style="left:489.90px;top:191.00px;font-size:8.9px;line-height:8.9px;color:#4a4a4a;font-weight:700;letter-spacing:-0.068px;">3-D Clustered Column</span>
<span class="t" style="left:489.90px;top:207.00px;font-size:8.8px;line-height:8.8px;color:#595959;letter-spacing:0.030px;">Use this chart type to:</span>
<span class="t" style="left:489.90px;top:218.00px;font-size:8.8px;line-height:8.8px;color:#595959;letter-spacing:-0.026px;">• Compare values across a few</span>
<span class="t" style="left:489.90px;top:230.00px;font-size:8.8px;line-height:8.8px;color:#595959;letter-spacing:-0.050px;">categories.</span>
<span class="t" style="left:489.90px;top:252.00px;font-size:8.8px;line-height:8.8px;color:#595959;letter-spacing:-0.077px;">Use it when:</span>
<span class="t" style="left:489.90px;top:264.00px;font-size:8.8px;line-height:8.8px;color:#595959;letter-spacing:0.046px;">• The order of categories is not</span>
<span class="t" style="left:489.90px;top:275.00px;font-size:8.8px;line-height:8.8px;color:#595959;letter-spacing:0.297px;">important.</span>
</body></html>
